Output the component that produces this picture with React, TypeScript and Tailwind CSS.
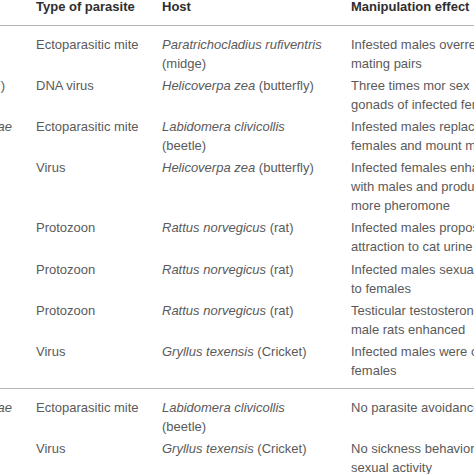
import type { ReactNode } from "react";

interface Row {
  lead?: ReactNode;
  leadPad?: string;
  type: string;
  host: ReactNode[];
  effect: string[];
}

const group1: Row[] = [
  {
    type: "Ectoparasitic mite",
    host: [<i key="a">Paratrichocladius rufiventris</i>, "(midge)"],
    effect: ["Infested males overreact to", "mating pairs"],
  },
  {
    lead: "HzNV-2 (‘Hz-2V’)",
    leadPad: "pr-[31px]",
    type: "DNA virus",
    host: [<><i>Helicoverpa zea</i> (butterfly)</>],
    effect: ["Three times mor sex", "gonads of infected females"],
  },
  {
    lead: <i>Podapolipidae</i>,
    leadPad: "pr-[24px]",
    type: "Ectoparasitic mite",
    host: [<i key="a">Labidomera clivicollis</i>, "(beetle)"],
    effect: ["Infested males replace", "females and mount males"],
  },
  {
    type: "Virus",
    host: [<><i>Helicoverpa zea</i> (butterfly)</>],
    effect: ["Infected females enhance contact", "with males and produce", "more pheromone"],
  },
  {
    type: "Protozoon",
    host: [<><i>Rattus norvegicus</i> (rat)</>],
    effect: ["Infected males propose", "attraction to cat urine"],
  },
  {
    type: "Protozoon",
    host: [<><i>Rattus norvegicus</i> (rat)</>],
    effect: ["Infected males sexually attractive", "to females"],
  },
  {
    type: "Protozoon",
    host: [<><i>Rattus norvegicus</i> (rat)</>],
    effect: ["Testicular testosterone in", "male rats enhanced"],
  },
  {
    type: "Virus",
    host: [<><i>Gryllus texensis</i> (Cricket)</>],
    effect: ["Infected males were courting", "females"],
  },
];

const group2: Row[] = [
  {
    lead: <i>Podapolipidae</i>,
    leadPad: "pr-[24px]",
    type: "Ectoparasitic mite",
    host: [<i key="a">Labidomera clivicollis</i>, "(beetle)"],
    effect: ["No parasite avoidance"],
  },
  {
    type: "Virus",
    host: [<><i>Gryllus texensis</i> (Cricket)</>],
    effect: ["No sickness behavior", "sexual activity"],
  },
];

const cols = "grid grid-cols-[36px_126px_189px_300px]";

function TableRow({ r }: { r: Row }) {
  return (
    <div className={`${cols} py-[1.55px]`}>
      <div className={`flex justify-end overflow-hidden whitespace-nowrap ${r.leadPad ?? ""}`}>{r.lead}</div>
      <div className="whitespace-nowrap">{r.type}</div>
      <div className="whitespace-nowrap">
        {r.host.map((h, i) => <div key={i}>{h}</div>)}
      </div>
      <div className="whitespace-nowrap">
        {r.effect.map((e, i) => <div key={i}>{e}</div>)}
      </div>
    </div>
  );
}

export default function App() {
  return (
    <div className="w-[474px] h-[474px] overflow-hidden bg-white font-['Liberation_Sans',Arial,sans-serif] text-[13px] leading-[19px] text-[#5a5a5a]">
      <div className={`${cols} mt-[-3px] pb-[9px] font-bold text-[#2e2e2e]`}>
        <div />
        <div>Type of parasite</div>
        <div>Host</div>
        <div className="whitespace-nowrap">Manipulation effect</div>
      </div>
      <div className="border-t border-[#b4b4b4] pt-[7.5px] pb-[7px]">
        {group1.map((r, i) => <TableRow key={i} r={r} />)}
      </div>
      <div className="border-t border-[#b4b4b4] pt-[7.3px]">
        {group2.map((r, i) => <TableRow key={i} r={r} />)}
      </div>
    </div>
  );
}
